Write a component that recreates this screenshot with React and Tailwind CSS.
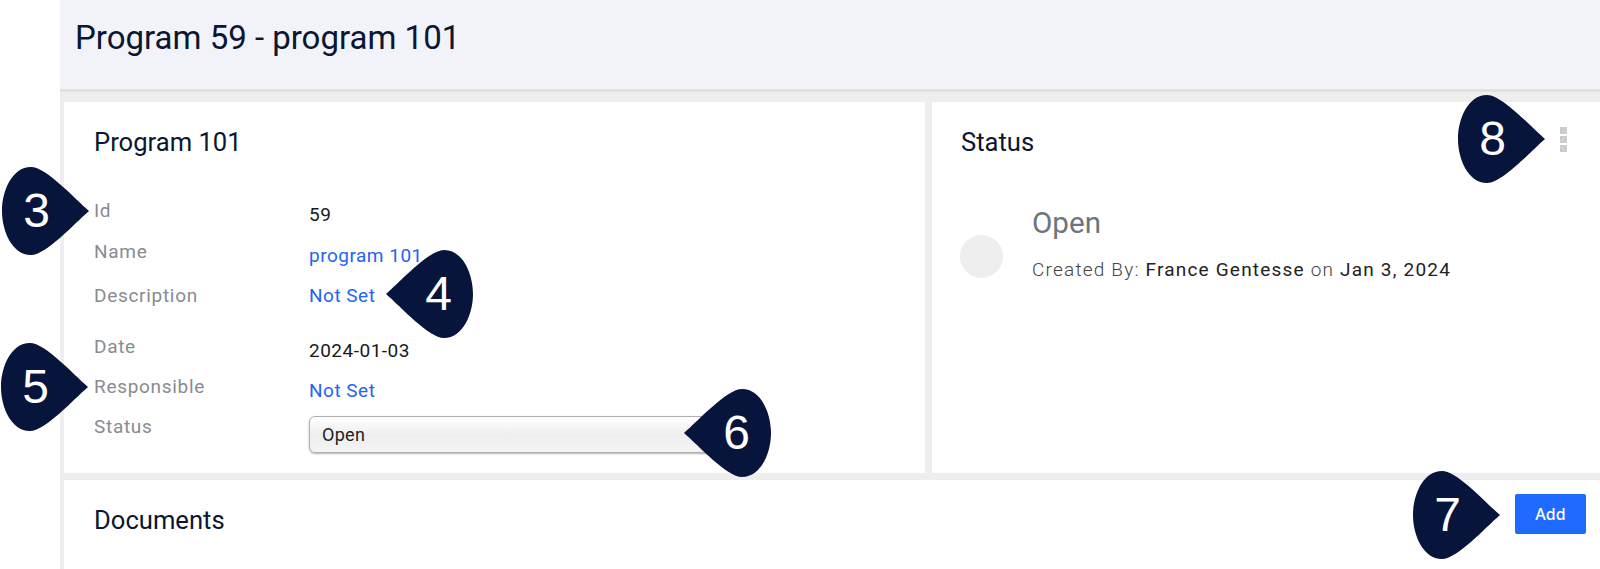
const Pin = ({ n, flip, className }) => (
  <div className={`absolute w-[88px] h-[88px] flex items-center justify-center ${className}`}>
    <svg viewBox="0 0 88 88" className={`absolute inset-0 w-[88px] h-[88px] ${flip ? "-scale-x-100" : ""}`}>
      <path d="M87 44C72 31 44 0 29 0C10 0 0 24 0 44C0 64 10 88 29 88C44 88 72 57 87 44Z" fill="#07143b" />
    </svg>
    <span
      className={`relative text-white text-[48px] leading-none font-['Liberation_Sans',sans-serif] ${
        flip ? "pl-[19px]" : "pr-[19px]"
      }`}
    >
      {n}
    </span>
  </div>
);

const rows = [
  { label: "Id", value: "59", h: "h-[41px]" },
  { label: "Name", value: "program 101", link: true, h: "h-[44px]" },
  { label: "Description", value: "Not Set", link: true, h: "h-[51px]", flat: true },
  { label: "Date", value: "2024-01-03", h: "h-[40px]" },
  { label: "Responsible", value: "Not Set", link: true, h: "h-[40px]" },
];

export default function App() {
  return (
    <div className="relative w-[1600px] h-[569px] overflow-hidden bg-white font-['Roboto',sans-serif] flex">
      <div className="w-[60px] shrink-0" />
      <div className="flex-1 flex flex-col bg-[#eeeeee]">
        <div className="h-[92px] shrink-0 bg-[#f2f3f8] border-b-[3px] border-[#e0e0e0] pl-[15px] pt-[17px]">
          <h1 className="text-[33px] leading-[42px] text-[#0b1630]">Program 59 - program 101</h1>
        </div>
        <div className="flex-1 flex flex-col pl-[4px] pt-[10px] gap-[7px]">
          <div className="h-[371px] flex gap-[7px]">
            <div className="w-[861px] bg-white pl-[30px] pt-[26px]">
              <h2 className="text-[25.6px] leading-[28px] text-[#0b1630]">Program 101</h2>
              <div className="mt-[43px] flex flex-col">
                {rows.map((r) => (
                  <div key={r.label} className={`flex ${r.h}`}>
                    <div className="w-[215px] text-[19px] leading-[24px] tracking-[0.7px] text-[#888b90]">{r.label}</div>
                    <div
                      className={`text-[19px] leading-[24px] tracking-[0.5px] ${r.flat ? "" : "pt-[4px]"} ${
                        r.link ? "text-[#2463f5]" : "text-[#1a1a1a]"
                      }`}
                    >
                      {r.value}
                    </div>
                  </div>
                ))}
                <div className="flex h-[38px]">
                  <div className="w-[215px] text-[19px] leading-[24px] tracking-[0.7px] text-[#888b90]">Status</div>
                  <div className="w-[420px] h-[37px] mt-[1px] rounded-[6px] border border-[#b0b0b0] shadow-[0_1px_2px_rgba(0,0,0,0.3)] bg-gradient-to-b from-white via-[#eeeeee] to-[#f4f4f4] px-[12px] flex items-center text-[18px] tracking-[0.3px] text-[#222222]">
                    Open
                  </div>
                </div>
              </div>
            </div>
            <div className="flex-1 bg-white relative pl-[29px] pt-[26px]">
              <h2 className="text-[25.6px] leading-[28px] text-[#0b1630]">Status</h2>
              <div className="absolute right-[33px] top-[25px] flex flex-col gap-[2px]">
                <span className="w-[7px] h-[7px] bg-[#cccccc]" />
                <span className="w-[7px] h-[7px] bg-[#cccccc]" />
                <span className="w-[7px] h-[7px] bg-[#cccccc]" />
              </div>
              <div className="mt-[50px] flex items-end gap-[29px]">
                <div className="w-[43px] h-[43px] rounded-full bg-[#eeeeee] mb-[4px] -ml-[1px]" />
                <div>
                  <div className="text-[29.6px] leading-[34px] text-[#6c757d]">Open</div>
                  <div className="mt-[18px] text-[19px] leading-[24px] tracking-[1.2px] font-light text-[#444444]">
                    Created By: <span className="font-normal text-[#222222]">France Gentesse</span> on{" "}
                    <span className="font-normal text-[#222222]">Jan 3, 2024</span>
                  </div>
                </div>
              </div>
            </div>
          </div>
          <div className="flex-1 bg-white flex justify-between pl-[30px] pr-[14px] pt-[14px]">
            <h2 className="text-[25.6px] leading-[28px] mt-[12px] text-[#0b1630]">Documents</h2>
            <button className="w-[71px] h-[40px] rounded-[2px] bg-[#1f6bff] text-white text-[16px] font-medium font-['Noto_Sans',sans-serif]">
              Add
            </button>
          </div>
        </div>
      </div>
      <Pin n="3" className="left-[2px] top-[167px]" />
      <Pin n="4" flip className="left-[385px] top-[250px]" />
      <Pin n="5" className="left-[1px] top-[343px]" />
      <Pin n="6" flip className="left-[683px] top-[389px]" />
      <Pin n="7" className="left-[1413px] top-[471px]" />
      <Pin n="8" className="left-[1458px] top-[95px]" />
    </div>
  );
}
